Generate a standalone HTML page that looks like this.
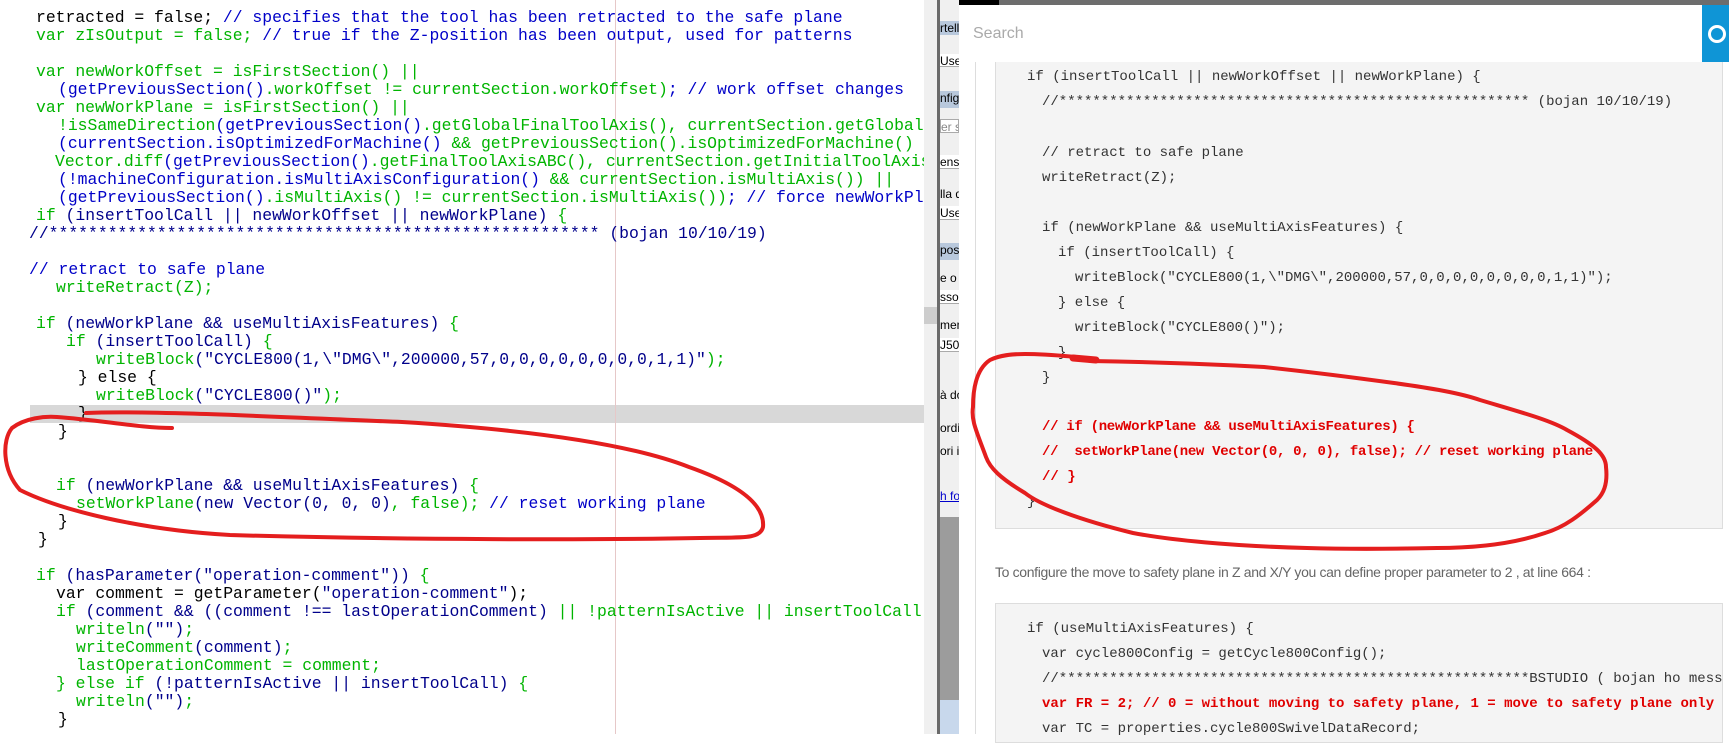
<!DOCTYPE html>
<html><head><meta charset="utf-8"><style>
*{margin:0;padding:0;box-sizing:border-box}
body{width:1729px;height:734px;position:relative;overflow:hidden;background:#fff;font-family:"Liberation Sans",sans-serif}
.ed{position:absolute;left:0;top:0;width:924px;height:734px;background:#fff;overflow:hidden}
.l{position:absolute;white-space:pre;font-family:"Liberation Mono",monospace;font-size:16.4px;line-height:18px;height:18px}
.g{color:#00b400}.b{color:#0000c8}.k{color:#000}.db{color:#00008b}
.r{position:absolute;white-space:pre;font-family:"Liberation Mono",monospace;font-size:14px;line-height:25px;color:#333}
.red{color:#e00000;font-weight:bold}
.side div{position:absolute;left:940px;width:19px;font-size:12px;overflow:hidden;white-space:nowrap;color:#000}
</style></head><body>
<div class="ed">
<div style="position:absolute;left:30px;top:405px;width:894px;height:18px;background:#d8d8d8"></div>
<div style="position:absolute;left:615px;top:0;width:1px;height:734px;background:#e6c8c8"></div>
<div class="l" style="left:36px;top:9px"><span class="k">retracted = false;</span><span class="b"> // specifies that the tool has been retracted to the safe plane</span></div>
<div class="l" style="left:36px;top:27px"><span class="g">var zIsOutput = false;</span><span class="b"> // true if the Z-position has been output, used for patterns</span></div>
<div class="l g" style="left:36px;top:63px">var newWorkOffset = isFirstSection() ||</div>
<div class="l" style="left:58px;top:81px"><span class="b">(getPreviousSection()</span><span class="g">.workOffset != currentSection.workOffset)</span><span class="b">; // work offset changes</span></div>
<div class="l g" style="left:36px;top:99px">var newWorkPlane = isFirstSection() ||</div>
<div class="l" style="left:58px;top:117px"><span class="g">!isSameDirection</span><span class="b">(getPreviousSection()</span><span class="g">.getGlobalFinalToolAxis(), currentSection.getGlobalInitialToolAxis())</span></div>
<div class="l" style="left:58px;top:135px"><span class="b">(currentSection.isOptimizedForMachine()</span><span class="g"> &amp;&amp; getPreviousSection().isOptimizedForMachine() &amp;&amp;</span></div>
<div class="l" style="left:55px;top:153px"><span class="g">Vector.diff</span><span class="b">(getPreviousSection()</span><span class="g">.getFinalToolAxisABC(), currentSection.getInitialToolAxisABC())</span></div>
<div class="l" style="left:58px;top:171px"><span class="b">(!machineConfiguration.isMultiAxisConfiguration()</span><span class="g"> &amp;&amp; currentSection.isMultiAxis()) ||</span></div>
<div class="l" style="left:58px;top:189px"><span class="b">(getPreviousSection()</span><span class="g">.isMultiAxis() != currentSection.isMultiAxis())</span><span class="b">; // force newWorkPlane</span></div>
<div class="l" style="left:36px;top:207px"><span class="g">if </span><span class="db">(insertToolCall || newWorkOffset || newWorkPlane)</span><span class="g"> {</span></div>
<div class="l db" style="left:29px;top:225px">//******************************************************** (bojan 10/10/19)</div>
<div class="l b" style="left:29px;top:261px">// retract to safe plane</div>
<div class="l g" style="left:56px;top:279px">writeRetract(Z);</div>
<div class="l" style="left:36px;top:315px"><span class="g">if </span><span class="db">(newWorkPlane &amp;&amp; useMultiAxisFeatures)</span><span class="g"> {</span></div>
<div class="l" style="left:66px;top:333px"><span class="g">if </span><span class="db">(insertToolCall)</span><span class="g"> {</span></div>
<div class="l" style="left:96px;top:351px"><span class="g">writeBlock</span><span class="db">("CYCLE800(1,\"DMG\",200000,57,0,0,0,0,0,0,0,0,1,1)"</span><span class="g">);</span></div>
<div class="l" style="left:78px;top:369px"><span class="k">} else {</span></div>
<div class="l" style="left:96px;top:387px"><span class="g">writeBlock</span><span class="db">("CYCLE800()"</span><span class="g">);</span></div>
<div class="l k" style="left:78px;top:405px">}</div>
<div class="l k" style="left:58px;top:423px">}</div>
<div class="l" style="left:56px;top:477px"><span class="g">if </span><span class="db">(newWorkPlane &amp;&amp; useMultiAxisFeatures)</span><span class="g"> {</span></div>
<div class="l" style="left:76px;top:495px"><span class="g">setWorkPlane</span><span class="db">(new Vector(0, 0, 0)</span><span class="g">, false);</span><span class="b"> // reset working plane</span></div>
<div class="l k" style="left:58px;top:513px">}</div>
<div class="l k" style="left:38px;top:531px">}</div>
<div class="l" style="left:36px;top:567px"><span class="g">if </span><span class="db">(hasParameter("operation-comment"))</span><span class="g"> {</span></div>
<div class="l" style="left:56px;top:585px"><span class="k">var comment = getParameter(</span><span class="db">"operation-comment"</span><span class="k">);</span></div>
<div class="l" style="left:56px;top:603px"><span class="g">if </span><span class="db">(comment &amp;&amp; ((comment !== lastOperationComment)</span><span class="g"> || !patternIsActive || insertToolCall)) {</span></div>
<div class="l" style="left:76px;top:621px"><span class="g">writeln</span><span class="db">("")</span><span class="g">;</span></div>
<div class="l" style="left:76px;top:639px"><span class="g">writeComment</span><span class="db">(comment)</span><span class="g">;</span></div>
<div class="l g" style="left:76px;top:657px">lastOperationComment = comment;</div>
<div class="l" style="left:56px;top:675px"><span class="g">} else if </span><span class="db">(!patternIsActive || insertToolCall)</span><span class="g"> {</span></div>
<div class="l" style="left:76px;top:693px"><span class="g">writeln</span><span class="db">("")</span><span class="g">;</span></div>
<div class="l k" style="left:58px;top:711px">}</div>
</div>
<div style="position:absolute;left:924px;top:0;width:13px;height:734px;background:#f0f0f0"></div>
<div style="position:absolute;left:924px;top:307px;width:13px;height:17px;background:#cdcdcd"></div>
<div style="position:absolute;left:937px;top:0;width:3px;height:734px;background:#6a6a6a"></div>
<div style="position:absolute;left:940px;top:0;width:19px;height:517px;background:#f0f0f0"></div>
<div style="position:absolute;left:940px;top:517px;width:19px;height:217px;background:#9c9c9c"></div>
<div style="position:absolute;left:940px;top:700px;width:19px;height:34px;background:#c8d8ec"></div>
<div class="side">
<div style="top:21px;height:14px;background:#b8c8dc">rtella</div>
<div style="top:54px;height:13px;background:#fff;border-bottom:1px solid #aaa">Users</div>
<div style="top:91px;height:17px;background:#b8c8dc">nfigu</div>
<div style="top:119px;height:14px;background:#fff;border:1px solid #aaa;color:#888">er se</div>
<div style="top:155px;height:14px;background:#fff;border-bottom:1px solid #aaa">ens</div>
<div style="top:187px;height:14px">lla d</div>
<div style="top:206px;height:14px;background:#fff;border-bottom:1px solid #aaa">User</div>
<div style="top:243px;height:17px;background:#b8c8dc">post</div>
<div style="top:271px;height:13px">e o N</div>
<div style="top:290px;height:14px;background:#fff;border-bottom:1px solid #aaa">sso</div>
<div style="top:318px;height:13px">ment</div>
<div style="top:338px;height:14px;background:#fff;border-bottom:1px solid #aaa">J50</div>
<div style="top:388px;height:14px">à do</div>
<div style="top:421px;height:13px">ordi</div>
<div style="top:444px;height:13px">ori il</div>
<div style="top:489px;height:13px;color:#00c;text-decoration:underline">h fo</div>
</div>
<div style="position:absolute;left:959px;top:0;width:770px;height:734px;background:#fff"></div>
<div style="position:absolute;left:959px;top:0;width:770px;height:5px;background:#6d6d6d"></div>
<div style="position:absolute;left:959px;top:0;width:40px;height:5px;background:#000"></div>
<div style="position:absolute;left:975px;top:62px;width:1px;height:672px;background:#ddd"></div>
<div style="position:absolute;left:995px;top:50px;width:728px;height:479px;background:#f4f4f4;border:1px solid #ddd"></div>
<div style="position:absolute;left:995px;top:603px;width:728px;height:140px;background:#f4f4f4;border:1px solid #ddd"></div>
<div style="position:absolute;left:959px;top:5px;width:743px;height:57px;background:#fff"></div>
<div style="position:absolute;left:973px;top:25px;font-size:16px;color:#aaa">Search</div>
<div style="position:absolute;left:1702px;top:5px;width:27px;height:57px;background:#0f95d6;overflow:hidden"><div style="position:absolute;left:6px;top:20px;width:18px;height:18px;border:3px solid #fff;border-radius:50%"></div></div>
<div class="r" style="left:1027px;top:65px">if (insertToolCall || newWorkOffset || newWorkPlane) {</div>
<div class="r" style="left:1042px;top:90px">//******************************************************** (bojan 10/10/19)</div>
<div class="r" style="left:1042px;top:141px">// retract to safe plane</div>
<div class="r" style="left:1042px;top:166px">writeRetract(Z);</div>
<div class="r" style="left:1042px;top:216px">if (newWorkPlane &amp;&amp; useMultiAxisFeatures) {</div>
<div class="r" style="left:1058px;top:241px">if (insertToolCall) {</div>
<div class="r" style="left:1075px;top:266px">writeBlock("CYCLE800(1,\"DMG\",200000,57,0,0,0,0,0,0,0,0,1,1)");</div>
<div class="r" style="left:1058px;top:291px">} else {</div>
<div class="r" style="left:1075px;top:316px">writeBlock("CYCLE800()");</div>
<div class="r" style="left:1058px;top:341px">}</div>
<div class="r" style="left:1042px;top:366px">}</div>
<div class="r red" style="left:1042px;top:415px;letter-spacing:-0.3px">// if (newWorkPlane &amp;&amp; useMultiAxisFeatures) {</div>
<div class="r red" style="left:1042px;top:440px;letter-spacing:-0.3px">//  setWorkPlane(new Vector(0, 0, 0), false); // reset working plane</div>
<div class="r red" style="left:1042px;top:465px">// }</div>
<div class="r" style="left:1027px;top:490px">}</div>
<div style="position:absolute;left:995px;top:564px;font-size:14px;color:#666;white-space:nowrap;letter-spacing:-0.35px">To configure the move to safety plane in Z and X/Y you can define proper parameter to 2 , at line 664 :</div>
<div class="r" style="left:1027px;top:617px">if (useMultiAxisFeatures) {</div>
<div class="r" style="left:1042px;top:642px">var cycle800Config = getCycle800Config();</div>
<div class="r" style="left:1042px;top:667px">//********************************************************BSTUDIO ( bojan ho messo</div>
<div class="r red" style="left:1042px;top:692px">var FR = 2; // 0 = without moving to safety plane, 1 = move to safety plane only in Z</div>
<div class="r" style="left:1042px;top:717px">var TC = properties.cycle800SwivelDataRecord;</div>
<div style="position:absolute;left:1723px;top:62px;width:6px;height:672px;background:#fff"></div>
<svg width="1729" height="734" style="position:absolute;left:0;top:0" fill="none" stroke="#e41e1e" stroke-width="4" stroke-linecap="round" stroke-linejoin="round">
<path d="M86 413 C150 410 300 418 402 422 C500 428 620 440 689 467 C740 485 765 505 763 527 C760 540 740 537 700 538 C600 540 400 540 230 535 C140 530 60 510 20 490 C2 470 2 440 12 428 C25 418 45 416 57 417 C100 420 140 428 172 428"/>
<path d="M1090 361 C1150 362 1210 364 1264 367 C1310 372 1350 377 1394 383 C1430 388 1460 393 1480 400 C1520 412 1550 420 1567 430 C1595 445 1606 455 1606 467 C1608 485 1603 494 1597 500 C1580 515 1565 527 1545 533 C1510 545 1470 548 1437 548 C1390 549 1340 549 1307 548 C1230 546 1170 540 1133 533 C1080 520 1040 505 1025 493 C1000 478 990 468 986 457 C976 430 971 420 973 407 C973 385 978 368 990 360 C1000 355 1012 354 1025 354 C1045 354 1065 356 1077 357"/>
<path d="M1073 358 L1096 360" stroke-width="7"/>
</svg>
</body></html>
